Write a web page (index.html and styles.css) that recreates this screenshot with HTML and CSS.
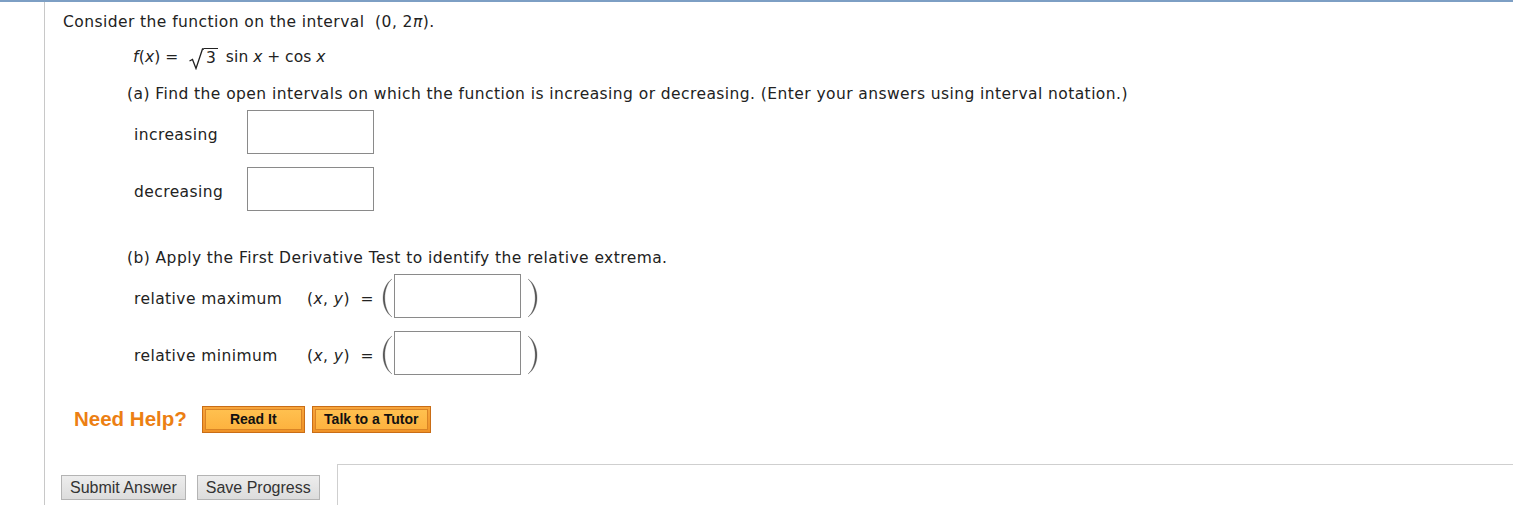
FILE: index.html
```html
<!DOCTYPE html>
<html>
<head>
<meta charset="utf-8">
<link rel="stylesheet" href="styles.css">
</head>
<body>
<div class="topbar"></div>
<div class="frame">
  <div class="question">
    <p class="intro">Consider the function on the interval&nbsp; (0, 2<i>π</i>).</p>
    <p class="func"><i>f</i>(<i>x</i>) = <span class="sqrt"><svg class="rad" width="16" height="22" viewBox="0 0 16 22"><path d="M1.5 13 L4.5 11.5 L8 20.5 L14.5 1 L16 1" fill="none" stroke="#222" stroke-width="1.3"/></svg><span class="radicand">3</span></span> sin <i>x</i> + cos <i>x</i></p>
    <p class="part">(a) Find the open intervals on which the function is increasing or decreasing. (Enter your answers using interval notation.)</p>
    <div class="answers">
      <div class="row"><span class="lbl lbl-a">increasing</span><span class="box"></span></div>
      <div class="row"><span class="lbl lbl-a">decreasing</span><span class="box"></span></div>
    </div>
    <p class="part partb">(b) Apply the First Derivative Test to identify the relative extrema.</p>
    <div class="answers">
      <div class="row"><span class="lbl lbl-b">relative maximum</span><span class="xy">(<i>x</i>, <i>y</i>) &nbsp;=</span><svg class="paren" width="12" height="40" viewBox="0 0 12 40"><path d="M10 1 C-2 9 -2 31 10 39 C0.4 31 0.4 9 10 1 Z" fill="#555" stroke="#555" stroke-width="0.3"/></svg><span class="box"></span><svg class="paren paren-r" width="12" height="40" viewBox="0 0 12 40"><path d="M2 1 C14 9 14 31 2 39 C11.6 31 11.6 9 2 1 Z" fill="#555" stroke="#555" stroke-width="0.3"/></svg></div>
      <div class="row"><span class="lbl lbl-b">relative minimum</span><span class="xy">(<i>x</i>, <i>y</i>) &nbsp;=</span><svg class="paren" width="12" height="40" viewBox="0 0 12 40"><path d="M10 1 C-2 9 -2 31 10 39 C0.4 31 0.4 9 10 1 Z" fill="#555" stroke="#555" stroke-width="0.3"/></svg><span class="box"></span><svg class="paren paren-r" width="12" height="40" viewBox="0 0 12 40"><path d="M2 1 C14 9 14 31 2 39 C11.6 31 11.6 9 2 1 Z" fill="#555" stroke="#555" stroke-width="0.3"/></svg></div>
    </div>
  </div>
  <div class="help">
    <span class="need">Need Help?</span>
    <span class="obtn obtn-read"><span class="obtn-in">Read It</span></span>
    <span class="obtn obtn-tutor"><span class="obtn-in">Talk to a Tutor</span></span>
  </div>
  <div class="footer">
    <div class="gbtns">
      <span class="gbtn">Submit Answer</span>
      <span class="gbtn">Save Progress</span>
    </div>
    <div class="panel"></div>
  </div>
</div>
</body>
</html>
```
FILE: styles.css
```css
html, body {
  margin: 0;
  padding: 0;
  background: #fff;
  height: 505px;
  overflow: hidden;
}
body {
  font-family: "DejaVu Sans", Verdana, sans-serif;
  font-size: 15.5px;
  letter-spacing: 0.43px;
  color: #222;
}
.topbar {
  height: 2px;
  background: #7d9fc4;
}
.frame {
  margin-left: 44px;
  border-left: 1px solid #c8c8c8;
  height: 503px;
}
.question {
  padding-left: 18px;
  padding-top: 11px;
}
.question p {
  margin: 0;
  line-height: 18px;
}
.intro {
  height: 18px;
}
.func {
  margin-left: 70px !important;
  margin-top: 15px !important;
  display: flex;
  align-items: center;
  white-space: pre;
  height: 22px;
  letter-spacing: 0.2px;
  word-spacing: -0.5px;
}
.sqrt {
  display: inline-flex;
  align-items: flex-end;
  margin-left: 5px;
  margin-right: 3px;
}
.rad {
  display: block;
  margin-bottom: -3px;
}
.radicand {
  border-top: 1.3px solid #222;
  padding: 1px 2px 0 2px;
  line-height: 17px;
}
.part {
  margin-left: 64px !important;
  margin-top: 17px !important;
}
.partb {
  margin-top: 38px !important;
}
.answers {
  margin-left: 71px;
  margin-top: 7px;
  display: flex;
  flex-direction: column;
  gap: 13px;
}
.row {
  display: flex;
  align-items: center;
  height: 44px;
}
.lbl {
  display: block;
  margin-top: 5px;
}
.lbl-a {
  width: 113px;
}
.lbl-b {
  width: 173px;
}
.xy {
  width: 75px;
  white-space: nowrap;
  margin-top: 5px;
}
.box {
  display: block;
  width: 125px;
  height: 42px;
  border: 1px solid #8a8a8a;
  background: #fff;
}
.paren {
  display: block;
  margin-top: 4px;
}
.paren-r {
  margin-left: 5px;
}
.help {
  margin-left: 29px;
  margin-top: 30px;
  display: flex;
  align-items: center;
  gap: 7px;
  height: 28px;
}
.need {
  font-family: "Liberation Sans", Arial, sans-serif;
  font-weight: bold;
  font-size: 20.5px;
  letter-spacing: 0;
  color: #ec7f13;
  margin-right: 8px;
}
.obtn {
  display: flex;
  box-sizing: border-box;
  height: 27px;
  border: 1px solid #c96d16;
  background: linear-gradient(#f7a53c, #ef9226);
  padding: 2px;
}
.obtn-in {
  display: flex;
  align-items: center;
  justify-content: center;
  width: 100%;
  border: 1px solid #d98325;
  background: linear-gradient(#ffc04f, #fdb23f);
  font-family: "Liberation Sans", Arial, sans-serif;
  font-weight: bold;
  font-size: 14px;
  letter-spacing: 0;
  color: #111;
}
.obtn-read {
  width: 103px;
}
.obtn-tutor {
  width: 119px;
}
.footer {
  margin-top: 31px;
  display: flex;
  align-items: flex-start;
}
.gbtns {
  margin-left: 16px;
  margin-top: 11px;
  display: flex;
  gap: 11px;
}
.gbtn {
  display: block;
  box-sizing: border-box;
  height: 25px;
  padding: 0 8px;
  border: 1px solid #b4b4b4;
  background: linear-gradient(#ededed, #dcdcdc);
  font-family: "Liberation Sans", Arial, sans-serif;
  font-size: 16px;
  letter-spacing: 0;
  line-height: 23px;
  color: #333;
}
.panel {
  margin-left: 17px;
  flex: 1;
  height: 60px;
  border-top: 1px solid #cfcfcf;
  border-left: 1px solid #cfcfcf;
}
```
